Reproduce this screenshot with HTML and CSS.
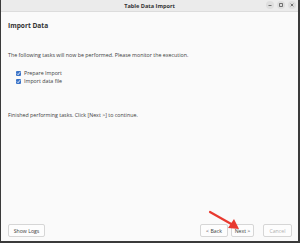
FILE: index.html
```html
<!DOCTYPE html>
<html>
<head>
<meta charset="utf-8">
<link rel="stylesheet" href="styles.css">
</head>
<body>
<div class="window">
  <div class="titlebar">
    <span class="title">Table Data Import</span>
    <div class="wbtns">
      <span class="wbtn"><svg width="8" height="8" viewBox="0 0 8 8"><rect x="2.5" y="4" width="3" height="0.8" fill="#555"/></svg></span>
      <span class="wbtn"><svg width="8" height="8" viewBox="0 0 8 8"><rect x="2.6" y="2.6" width="2.8" height="2.8" fill="none" stroke="#555" stroke-width="0.8"/></svg></span>
      <span class="wbtn"><svg width="8" height="8" viewBox="0 0 8 8"><path d="M2.7 2.7L5.3 5.3M5.3 2.7L2.7 5.3" stroke="#555" stroke-width="0.8"/></svg></span>
    </div>
  </div>
  <div class="content">
    <h1 class="heading">Import Data</h1>
    <p class="intro">The following tasks will now be performed. Please monitor the execution.</p>
    <ul class="tasks">
      <li><span class="check"><svg width="5" height="5" viewBox="0 0 5 5"><path d="M1 2.6L2.1 3.7L4.1 1.2" fill="none" stroke="#fff" stroke-width="0.9"/></svg></span>Prepare Import</li>
      <li><span class="check"><svg width="5" height="5" viewBox="0 0 5 5"><path d="M1 2.6L2.1 3.7L4.1 1.2" fill="none" stroke="#fff" stroke-width="0.9"/></svg></span>Import data file</li>
    </ul>
    <p class="done">Finished performing tasks. Click [Next &gt;] to continue.</p>
    <div class="spacer"></div>
    <div class="footer">
      <button class="btn logs">Show Logs</button>
      <div class="right">
        <button class="btn back">&lt; Back</button>
        <button class="btn next">Next &gt;</button>
        <button class="btn cancel">Cancel</button>
      </div>
    </div>
  </div>
  <svg class="arrow" width="40" height="30" viewBox="0 0 40 30">
    <line x1="3" y1="4" x2="26" y2="17" stroke="#e8392f" stroke-width="2.2" stroke-linecap="round"/>
    <polygon points="32,21 21,20 27,11" fill="#e8392f"/>
  </svg>
</div>
</body>
</html>
```
FILE: styles.css
```css
* { box-sizing: border-box; }
html, body { margin: 0; padding: 0; }
body { width: 300px; height: 243px; overflow: hidden; background: #2e2e2e; font-family: "Open Sans", "Liberation Sans", sans-serif; }
.window {
  position: relative;
  width: 300px; height: 243px;
  border-left: 1px solid #3a3a3a;
  border-right: 2px solid #3a3a3a;
  border-bottom: 2px solid #3a3a3a;
  background: #fafafa;
  display: flex; flex-direction: column;
}
.titlebar {
  height: 12px;
  background: #ebebeb;
  border-bottom: 1px solid #dcdcdc;
  display: flex; align-items: center; justify-content: center;
  position: relative;
}
.title { font-size: 5.6px; font-weight: 700; color: #333; }
.wbtns { position: absolute; right: 2px; top: 1px; display: flex; gap: 3px; }
.wbtn { width: 8px; height: 8px; border-radius: 50%; background: #dedede; display: flex; }
.content { flex: 1; display: flex; flex-direction: column; padding: 0 6px 4px 6px; color: #3c3c3c; }
.heading { margin: 9px 0 0 1px; font-size: 6.6px; font-weight: 700; color: #333; }
.intro { margin: 21px 0 0 1px; font-size: 5.3px; }
.tasks { list-style: none; margin: 10px 0 0 9px; padding: 0; font-size: 5.3px; }
.tasks li { display: flex; align-items: center; height: 8px; }
.check { width: 5px; height: 5px; border-radius: 1px; background: #3a73c8; display: inline-flex; margin-right: 3px; }
.done { margin: 26px 0 0 1px; font-size: 5.3px; }
.spacer { flex: 1; }
.footer { display: flex; justify-content: space-between; align-items: center; }
.right { display: flex; gap: 3px; }
.btn {
  font-family: inherit; font-size: 5.2px; color: #3c3c3c;
  background: #fdfdfd; border: 1px solid #d6d6d6; border-radius: 2px;
  height: 13px; padding: 0; margin: 0; white-space: nowrap;
  display: flex; align-items: center; justify-content: center;
}
.logs { width: 37px; margin-left: 1px; }
.back { width: 28px; }
.next { width: 23px; margin-right: 6px; }
.cancel { width: 29px; color: #b0b0b0; }
.arrow { position: absolute; left: 206px; top: 208px; }
```
